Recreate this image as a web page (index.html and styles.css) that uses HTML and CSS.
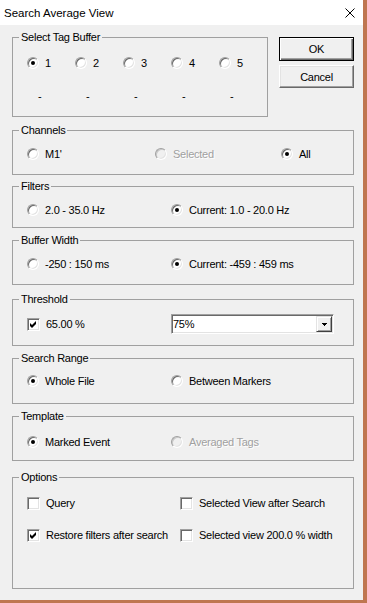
FILE: index.html
```
<!DOCTYPE html>
<html lang="en">

<head>
    <meta charset="UTF-8">
    <title>Search Average View</title>
    <link rel="stylesheet" href="styles.css">
</head>

<body>
    <div class="window">
        <div class="titlebar">
            <span class="title">Search Average View</span>
            <svg class="close" width="10" height="10" viewBox="0 0 10 10">
                <path d="M0.5 0.5 L9.5 9.5 M9.5 0.5 L0.5 9.5" stroke="#000" stroke-width="1" fill="none" />
            </svg>
        </div>

        <div class="dialog">
            <div class="top">
                <div class="group g-tag">
                    <div class="caption">Select Tag Buffer</div>
                    <div class="row tags">
                        <label class="opt"><span class="radio on"></span>1</label>
                        <label class="opt"><span class="radio"></span>2</label>
                        <label class="opt"><span class="radio"></span>3</label>
                        <label class="opt"><span class="radio"></span>4</label>
                        <label class="opt"><span class="radio"></span>5</label>
                    </div>
                    <div class="row tags dashes">
                        <span>-</span>
                        <span>-</span>
                        <span>-</span>
                        <span>-</span>
                        <span>-</span>
                    </div>
                </div>
                <div class="buttons">
                    <button class="btn default">OK</button>
                    <button class="btn cancel">Cancel</button>
                </div>
            </div>

            <div class="group g-channels">
                <div class="caption">Channels</div>
                <div class="row three">
                    <label class="opt"><span class="radio"></span>M1'</label>
                    <label class="opt disabled"><span class="radio"></span>Selected</label>
                    <label class="opt"><span class="radio on"></span>All</label>
                </div>
            </div>

            <div class="group g-filters">
                <div class="caption">Filters</div>
                <div class="row two">
                    <label class="opt"><span class="radio"></span>2.0 - 35.0 Hz</label>
                    <label class="opt"><span class="radio on"></span>Current: 1.0 - 20.0 Hz</label>
                </div>
            </div>

            <div class="group g-buffer">
                <div class="caption">Buffer Width</div>
                <div class="row two">
                    <label class="opt"><span class="radio"></span>-250 : 150 ms</label>
                    <label class="opt"><span class="radio on"></span>Current: -459 : 459 ms</label>
                </div>
            </div>

            <div class="group g-threshold">
                <div class="caption">Threshold</div>
                <div class="row two">
                    <label class="opt">
                        <span class="check">
                            <svg width="13" height="13" viewBox="0 0 13 13">
                                <polygon points="3,5 5,7 9,3 9,6 5,10 3,8" fill="#000" />
                            </svg>
                        </span>65.00 %
                    </label>
                    <div class="combo">
                        <span>75%</span>
                        <span class="combo-btn">
                            <svg width="5" height="3" viewBox="0 0 5 3">
                                <rect x="0" y="0" width="5" height="1" fill="#000" />
                                <rect x="1" y="1" width="3" height="1" fill="#000" />
                                <rect x="2" y="2" width="1" height="1" fill="#000" />
                            </svg>
                        </span>
                    </div>
                </div>
            </div>

            <div class="group g-range">
                <div class="caption">Search Range</div>
                <div class="row two">
                    <label class="opt"><span class="radio on"></span>Whole File</label>
                    <label class="opt"><span class="radio"></span>Between Markers</label>
                </div>
            </div>

            <div class="group g-template">
                <div class="caption">Template</div>
                <div class="row two">
                    <label class="opt"><span class="radio on"></span>Marked Event</label>
                    <label class="opt disabled"><span class="radio"></span>Averaged Tags</label>
                </div>
            </div>

            <div class="group g-options">
                <div class="caption">Options</div>
                <div class="row wide">
                    <label class="opt"><span class="check"></span>Query</label>
                    <label class="opt"><span class="check"></span>Selected View after Search</label>
                </div>
                <div class="row wide second">
                    <label class="opt">
                        <span class="check">
                            <svg width="13" height="13" viewBox="0 0 13 13">
                                <polygon points="3,5 5,7 9,3 9,6 5,10 3,8" fill="#000" />
                            </svg>
                        </span>Restore filters after search
                    </label>
                    <label class="opt"><span class="check"></span>Selected view 200.0 % width</label>
                </div>
            </div>
        </div>
    </div>
</body>

</html>
```

FILE: styles.css
```
* {
    margin: 0;
    padding: 0;
    box-sizing: border-box;
}

body {
    font-family: "Liberation Sans", Arial, sans-serif;
    font-size: 11px;
    letter-spacing: -0.25px;
    color: #000;
    background-color: #f0f0f0;
}

.window {
    width: 367px;
    height: 603px;
    background-color: #f0f0f0;
    border-right: 4px solid #bf7650;
    border-bottom: 3px solid #bf7650;
}

/* 标题栏 */
.titlebar {
    height: 25px;
    background-color: #fff;
    display: flex;
    align-items: center;
    justify-content: space-between;
    padding: 0 8px 0 4px;
}

.title {
    font-size: 11.5px;
    letter-spacing: 0;
}

.close {
    display: block;
}

.dialog {
    padding: 0 9px 0 12px;
}

.top {
    display: flex;
    gap: 11px;
    margin-top: 12px;
}

/* 分组框 */
.group {
    border: 1px solid #a0a0a0;
    padding-left: 14px;
}

.caption {
    margin: -7px 0 0 6px;
    padding: 0 2px;
    width: max-content;
    line-height: 13px;
    background-color: #f0f0f0;
    position: relative;
    left: -14px;
}

.row {
    display: flex;
    align-items: center;
    height: 16px;
    margin-top: 9px;
}

.opt {
    display: flex;
    align-items: center;
    gap: 6px;
    white-space: nowrap;
}

.disabled {
    color: #a0a0a0;
    text-shadow: 1px 1px #fff;
}

.tags {
    display: grid;
    grid-template-columns: repeat(5, 48px);
}

.dashes span {
    padding-left: 11px;
}

.two {
    display: grid;
    grid-template-columns: 144px 1fr;
}

.three {
    display: grid;
    grid-template-columns: 128px 126px 1fr;
}

.wide {
    display: grid;
    grid-template-columns: 153px 1fr;
}

/* 单选框 */
.radio {
    width: 12px;
    height: 12px;
    border-radius: 50%;
    background-color: #fff;
    border: 1px solid;
    border-color: #a0a0a0 #fff #fff #a0a0a0;
    box-shadow: inset 1px 1px #696969, inset -1px -1px #e3e3e3;
    position: relative;
    flex: none;
}

.radio.on::after {
    content: "";
    position: absolute;
    left: 3px;
    top: 3px;
    width: 4px;
    height: 4px;
    border-radius: 50%;
    background-color: #000;
}

.disabled .radio {
    background-color: #f0f0f0;
    box-shadow: inset 1px 1px #c8c8c8, inset -1px -1px #e3e3e3;
}

/* 复选框 */
.check {
    width: 13px;
    height: 13px;
    background-color: #fff;
    border: 1px solid;
    border-color: #a0a0a0 #fff #fff #a0a0a0;
    box-shadow: inset 1px 1px #696969, inset -1px -1px #e3e3e3;
    flex: none;
    position: relative;
}

.check svg {
    position: absolute;
    left: -1px;
    top: -1px;
}

/* 下拉框 */
.combo {
    width: 163px;
    height: 20px;
    background-color: #fff;
    border: 1px solid;
    border-color: #a0a0a0 #fff #fff #a0a0a0;
    box-shadow: inset 1px 1px #696969, inset -1px -1px #e3e3e3;
    padding: 1px;
    display: flex;
    align-items: center;
    justify-content: space-between;
}

.combo-btn {
    width: 16px;
    height: 16px;
    background-color: #f0f0f0;
    border: 1px solid;
    border-color: #e3e3e3 #404040 #404040 #e3e3e3;
    box-shadow: inset 1px 1px #fff, inset -1px -1px #a0a0a0;
    display: flex;
    align-items: center;
    justify-content: center;
}

.combo-btn svg {
    display: block;
}

/* 按钮 */
.buttons {
    display: flex;
    flex-direction: column;
    gap: 4px;
}

.btn {
    width: 75px;
    height: 23px;
    font: inherit;
    letter-spacing: inherit;
    color: #000;
    background-color: #f0f0f0;
    border: 1px solid;
    border-color: #fff #696969 #696969 #fff;
    box-shadow: inset -1px -1px #a0a0a0, inset 1px 1px #e3e3e3;
}

.btn.default {
    height: 24px;
    border-color: #000;
    box-shadow: inset 1px 1px #fff, inset -1px -1px #696969, inset -2px -2px #a0a0a0;
}

/* 每个分组的尺寸 */
.g-tag {
    width: 256px;
    height: 80px;
}

.g-tag .row {
    margin-top: 11px;
}

.g-tag .dashes {
    margin-top: 17px;
}

.g-channels {
    height: 45px;
    margin-top: 13px;
}

.g-filters {
    height: 42px;
    margin-top: 11px;
}

.g-buffer {
    height: 45px;
    margin-top: 12px;
}

.g-threshold {
    height: 47px;
    margin-top: 14px;
}

.g-threshold .row {
    height: 20px;
    margin-top: 8px;
}

.g-range {
    height: 46px;
    margin-top: 12px;
}

.g-range .row {
    margin-top: 8px;
}

.g-template {
    height: 45px;
    margin-top: 12px;
}

.g-template .row {
    margin-top: 11px;
}

.g-options {
    height: 112px;
    margin-top: 16px;
}

.g-options .row {
    margin-top: 11px;
}

.g-options .second {
    margin-top: 16px;
}
```
